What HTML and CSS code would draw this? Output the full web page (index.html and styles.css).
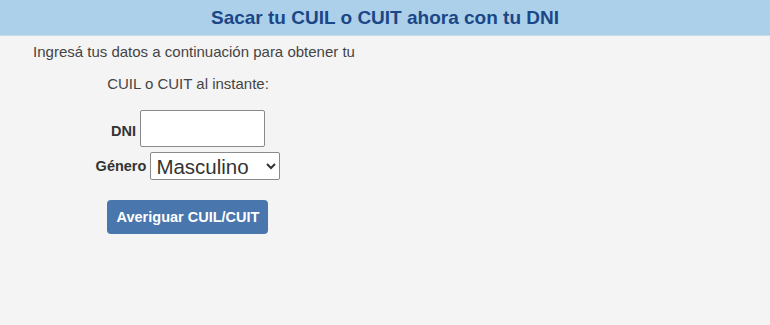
FILE: index.html
```html
<!DOCTYPE html>
<html lang="es">
<head>
<meta charset="utf-8">
<title>Sacar tu CUIL o CUIT</title>
<link rel="stylesheet" href="styles.css">
</head>
<body>
<header class="banner">
  <h1 class="banner-title">Sacar tu CUIL o CUIT ahora con tu DNI</h1>
</header>
<main class="panel">
  <p class="intro intro-first">Ingresá tus datos a continuación para obtener tu</p>
  <p class="intro intro-second">CUIL o CUIT al instante:</p>
  <form class="form">
    <div class="row row-dni">
      <label class="label" for="dni">DNI</label>
      <input class="input" id="dni" type="text">
    </div>
    <div class="row row-genero">
      <label class="label" for="genero">Género</label>
      <select class="select" id="genero">
        <option>Masculino</option>
        <option>Femenino</option>
      </select>
    </div>
    <button class="button" type="button">Averiguar CUIL/CUIT</button>
  </form>
</main>
</body>
</html>
```
FILE: styles.css
```css
html, body {
  margin: 0;
  padding: 0;
}
body {
  background: #f4f4f4;
  font-family: "Liberation Sans", Arial, sans-serif;
  width: 770px;
  height: 325px;
  overflow: hidden;
}
.banner {
  height: 36px;
  background: #acd0ea;
  display: flex;
  align-items: center;
  justify-content: center;
  border-bottom: 1px solid #c9dcea;
  box-sizing: border-box;
}
.banner-title {
  margin: 0;
  font-size: 19px;
  font-weight: bold;
  color: #1b4786;
}
.panel {
  width: 376px;
  display: flex;
  flex-direction: column;
  align-items: center;
}
.intro {
  margin: 0;
  font-size: 15px;
  color: #444;
  line-height: 16px;
}
.intro-first {
  margin-top: 8px;
  padding-left: 12px;
}
.intro-second {
  margin-top: 16px;
}
.form {
  display: flex;
  flex-direction: column;
  align-items: center;
  margin-top: 18px;
}
.row {
  display: flex;
  align-items: center;
  gap: 4px;
}
.row-genero {
  margin-top: 5px;
}
.label {
  font-size: 14.5px;
  font-weight: bold;
  color: #333;
}
.row-dni .label {
  margin-top: 4px;
}
.input {
  width: 125px;
  height: 37px;
  box-sizing: border-box;
  border: 1px solid #8a8a8a;
  border-radius: 2px;
  background: #fff;
  padding: 0 4px;
  font-size: 14px;
}
.select {
  width: 130px;
  height: 28px;
  box-sizing: border-box;
  border: 1px solid #8a8a8a;
  border-radius: 2px;
  background: #fff;
  color: #333;
  font-family: "Liberation Sans", Arial, sans-serif;
  font-size: 20.5px;
  padding: 0 0 0 1px;
}
.button {
  margin-top: 20px;
  width: 161px;
  height: 34px;
  background: #4a76ae;
  color: #fff;
  border: none;
  border-radius: 4px;
  font-family: "Liberation Sans", Arial, sans-serif;
  font-size: 14.5px;
  font-weight: bold;
  padding: 0;
}
```
